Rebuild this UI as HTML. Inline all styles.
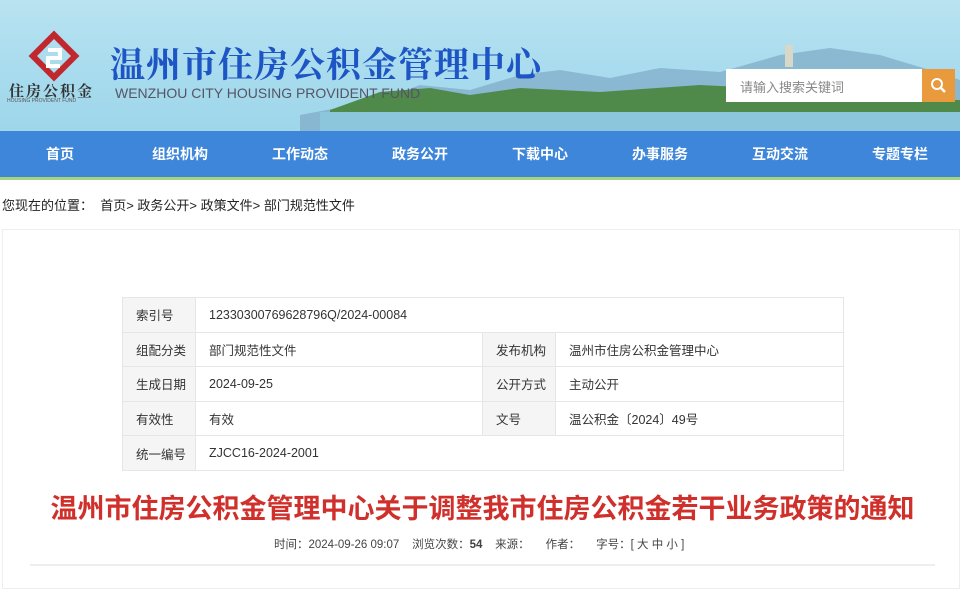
<!DOCTYPE html>
<html><head><meta charset="utf-8"><style>
*{margin:0;padding:0;box-sizing:border-box}
body{width:960px;height:577px;overflow:hidden;background:#fff;font-family:"Liberation Sans","Noto Sans CJK SC",sans-serif;position:relative}
.hdr{position:absolute;left:0;top:0;width:960px;height:131px;background:linear-gradient(180deg,#b9e3f1 0%,#a9dcee 50%,#9fd6ea 100%);overflow:hidden}
.nav{position:absolute;left:0;top:131px;width:960px;height:46px;background:#3e86da;display:flex}
.nav div{width:120.5px;text-align:center;color:#fff;font-weight:bold;font-size:14px;line-height:46px}
.gl{position:absolute;left:0;top:177px;width:960px;height:3px;background:#a6d47e}
.ab{position:absolute;font-size:13px;color:#222;white-space:nowrap}
table{position:absolute;left:122px;top:297px;width:722px;border-collapse:collapse;font-size:12.5px;color:#333}
td{border:1px solid #e6e6e6;height:34.6px;padding-left:13px;vertical-align:middle}
td.l{background:#f5f5f5;width:73px}
</style></head><body>
<div class="hdr">
<svg width="960" height="131" style="position:absolute;left:0;top:0">
<path d="M300 115 L380 100 L420 85 L470 90 L520 75 L560 70 L610 78 L660 68 L720 72 L780 55 L830 48 L880 55 L930 70 L960 80 L960 131 L300 131Z" fill="#7fa9c6" opacity=".7"/>
<path d="M330 110 L380 92 L430 88 L470 95 L520 88 L600 92 L700 85 L800 90 L900 100 L960 100 L960 120 L330 120Z" fill="#4f8a4a"/>
<rect x="320" y="112" width="640" height="19" fill="#8cc6dc"/>
<rect x="785" y="45" width="8" height="22" fill="#d8d8c8"/>
<g transform="translate(54,56) rotate(45)" fill="none" stroke="#c0282d" stroke-width="6"><rect x="-15" y="-15" width="30" height="30"/></g>
<path d="M48 50 L60 50 L60 58 L48 58 L48 66 L60 66" fill="none" stroke="#fff" stroke-width="4"/>
</svg>
<div class="ab" style="left:9px;top:80px;font-size:15px;font-weight:bold;color:#333;letter-spacing:2px;font-family:'Noto Serif CJK SC',serif">住房公积金</div>
<div class="ab" style="left:7px;top:98px;font-size:5px;color:#555">HOUSING PROVIDENT FUND</div>
<div class="ab" style="left:110px;top:38px;font-size:35px;font-weight:bold;color:#1e55c4;font-family:'Noto Serif CJK SC',serif;letter-spacing:1px">温州市住房公积金管理中心</div>
<div class="ab" style="left:115px;top:85px;font-size:14px;color:#556">WENZHOU CITY HOUSING PROVIDENT FUND</div>
<div style="position:absolute;left:726px;top:69px;width:197px;height:33px;background:#fff"></div>
<div class="ab" style="left:740px;top:77px;font-size:13px;color:#888">请输入搜索关键词</div>
<div style="position:absolute;left:922px;top:69px;width:33px;height:33px;background:#e89a3c">
<svg width="33" height="33"><circle cx="15" cy="15" r="5" fill="none" stroke="#fff" stroke-width="2"/><path d="M19 19 L23 23" stroke="#fff" stroke-width="2.5"/></svg></div>
</div>
<div class="nav"><div>首页</div><div>组织机构</div><div>工作动态</div><div>政务公开</div><div>下载中心</div><div>办事服务</div><div>互动交流</div><div>专题专栏</div></div>
<div class="gl"></div>
<div class="ab" style="left:2px;top:195px">您现在的位置：&nbsp; 首页&gt; 政务公开&gt; 政策文件&gt; 部门规范性文件</div>
<div style="position:absolute;left:2px;top:229px;width:958px;height:360px;border:1px solid #eee"></div>
<table>
<tr><td class="l">索引号</td><td colspan="3">12330300769628796Q/2024-00084</td></tr>
<tr><td class="l">组配分类</td><td style="width:287px">部门规范性文件</td><td class="l">发布机构</td><td>温州市住房公积金管理中心</td></tr>
<tr><td class="l">生成日期</td><td>2024-09-25</td><td class="l">公开方式</td><td>主动公开</td></tr>
<tr><td class="l">有效性</td><td>有效</td><td class="l">文号</td><td>温公积金〔2024〕49号</td></tr>
<tr><td class="l">统一编号</td><td colspan="3">ZJCC16-2024-2001</td></tr>
</table>
<div class="ab" style="left:0;width:965px;text-align:center;top:487px;font-size:27px;font-weight:bold;color:#d0302b">温州市住房公积金管理中心关于调整我市住房公积金若干业务政策的通知</div>
<div class="ab" style="left:274px;top:536px;font-size:11.5px;color:#444">时间：2024-09-26 09:07&nbsp;&nbsp;&nbsp; 浏览次数：<b>54</b>&nbsp;&nbsp;&nbsp; 来源：&nbsp;&nbsp;&nbsp;&nbsp; 作者：&nbsp;&nbsp;&nbsp;&nbsp; 字号：[ 大 中 小 ]</div>
<div style="position:absolute;left:30px;top:564px;width:905px;height:2px;background:#eee"></div>
</body></html>
